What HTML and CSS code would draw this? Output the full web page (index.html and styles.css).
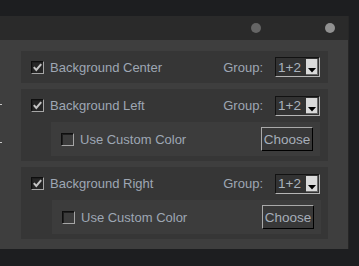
FILE: index.html
```html
<!DOCTYPE html>
<html>
<head>
<meta charset="utf-8">
<link rel="stylesheet" href="styles.css">
</head>
<body>
<div class="window">
  <div class="titlebar">
    <span class="dot dim"></span>
    <span class="dot"></span>
  </div>
  <div class="content">
    <div class="gutter">
      <span class="tick tick-a"></span>
      <span class="tick tick-b"></span>
    </div>
    <div class="boxes">
      <div class="group">
        <div class="row row-single">
          <span class="cb checked"><svg width="11" height="11" viewBox="0 0 11 11"><path d="M1.8 5.2 L4.3 8 L9.2 2.2" fill="none" stroke="#c4c4c4" stroke-width="2"/></svg></span>
          <span class="label">Background Center</span>
          <span class="group-label">Group:</span>
          <div class="select"><span class="value">1+2</span><span class="arrow"><svg width="8" height="5" viewBox="0 0 8 5"><polygon points="0,0 8,0 4,4.5" fill="#000"/></svg></span></div>
        </div>
      </div>
      <div class="group">
        <div class="row">
          <span class="cb checked"><svg width="11" height="11" viewBox="0 0 11 11"><path d="M1.8 5.2 L4.3 8 L9.2 2.2" fill="none" stroke="#c4c4c4" stroke-width="2"/></svg></span>
          <span class="label">Background Left</span>
          <span class="group-label">Group:</span>
          <div class="select"><span class="value">1+2</span><span class="arrow"><svg width="8" height="5" viewBox="0 0 8 5"><polygon points="0,0 8,0 4,4.5" fill="#000"/></svg></span></div>
        </div>
        <div class="sub">
          <span class="cb"></span>
          <span class="label">Use Custom Color</span>
          <span class="button">Choose</span>
        </div>
      </div>
      <div class="group">
        <div class="row">
          <span class="cb checked"><svg width="11" height="11" viewBox="0 0 11 11"><path d="M1.8 5.2 L4.3 8 L9.2 2.2" fill="none" stroke="#c4c4c4" stroke-width="2"/></svg></span>
          <span class="label">Background Right</span>
          <span class="group-label">Group:</span>
          <div class="select"><span class="value">1+2</span><span class="arrow"><svg width="8" height="5" viewBox="0 0 8 5"><polygon points="0,0 8,0 4,4.5" fill="#000"/></svg></span></div>
        </div>
        <div class="sub sub-shift">
          <span class="cb"></span>
          <span class="label">Use Custom Color</span>
          <span class="button">Choose</span>
        </div>
      </div>
    </div>
  </div>
</div>
</body>
</html>
```
FILE: styles.css
```css
html, body {
  margin: 0;
  padding: 0;
  background: #1d1e20;
  width: 359px;
  height: 266px;
  overflow: hidden;
  font-family: "Liberation Sans", Arial, sans-serif;
  font-size: 13px;
  color: #9ea7b4;
}
.window {
  margin-top: 16px;
  width: 348px;
  border-right: 1px solid #262626;
}
.titlebar {
  height: 24px;
  background: #2a2a2a;
  display: flex;
  align-items: center;
  padding-left: 251px;
  box-sizing: border-box;
  gap: 64px;
}
.dot {
  width: 10px;
  height: 10px;
  border-radius: 50%;
  background: #919191;
}
.dot.dim {
  background: #656565;
}
.content {
  background: #3e3e3e;
  display: flex;
  padding: 11px 20px 10px 0;
}
.gutter {
  width: 21px;
  flex: none;
  display: flex;
  flex-direction: column;
}
.tick {
  width: 2px;
  height: 1px;
  background: #c8c8c8;
}
.tick-a { margin-top: 53px; }
.tick-b { margin-top: 37px; }
.boxes {
  flex: 1;
  display: flex;
  flex-direction: column;
  gap: 6px;
}
.group {
  background: #363636;
  display: flex;
  flex-direction: column;
  padding-bottom: 5px;
}
.row {
  height: 33px;
  display: flex;
  align-items: center;
  padding: 0 8px 0 10px;
}
.row-single {
  height: 32px;
}
.group:first-child {
  padding-bottom: 0;
}
.cb {
  width: 13px;
  height: 13px;
  box-sizing: border-box;
  border: 1px solid;
  border-color: #0e0e0e #a6a6a6 #a6a6a6 #0e0e0e;
  box-shadow: inset 1px 1px 0 #1e1e1e;
  background: transparent;
  flex: none;
  display: flex;
  align-items: center;
  justify-content: center;
}
.cb.checked {
  background: #262626;
}
.label {
  margin-left: 6px;
  white-space: nowrap;
}
.group-label {
  margin-left: auto;
  margin-right: 12px;
}
.select {
  width: 45px;
  height: 20px;
  box-sizing: border-box;
  border: 1px solid;
  border-color: #121212 #b5b5b5 #b5b5b5 #121212;
  background: #323232;
  display: flex;
  align-items: center;
  color: #aab2bd;
  font-size: 13.5px;
}
.value {
  flex: 1;
  padding-left: 2px;
}
.arrow {
  width: 12px;
  height: 16px;
  margin-right: 1px;
  box-sizing: border-box;
  background: #dadada;
  border-right: 1px solid #6a6a6a;
  border-bottom: 1px solid #6a6a6a;
  display: flex;
  align-items: flex-end;
  justify-content: center;
  padding-bottom: 1px;
}
.sub {
  height: 34px;
  margin: 0 8px 0 30px;
  background: #3c3c3c;
  display: flex;
  align-items: center;
  padding: 0 7px 0 10px;
}
.sub-shift {
  margin-left: 31px;
  margin-right: 7px;
}
.sub .label {
  margin-left: 6px;
}
.button {
  margin-left: auto;
  width: 52px;
  height: 24px;
  box-sizing: border-box;
  border: 1px solid;
  border-color: #a9a9a9 #000 #000 #a9a9a9;
  background: #383838;
  display: flex;
  align-items: center;
  justify-content: center;
  color: #a6aeb9;
  font-size: 13.5px;
}
```
